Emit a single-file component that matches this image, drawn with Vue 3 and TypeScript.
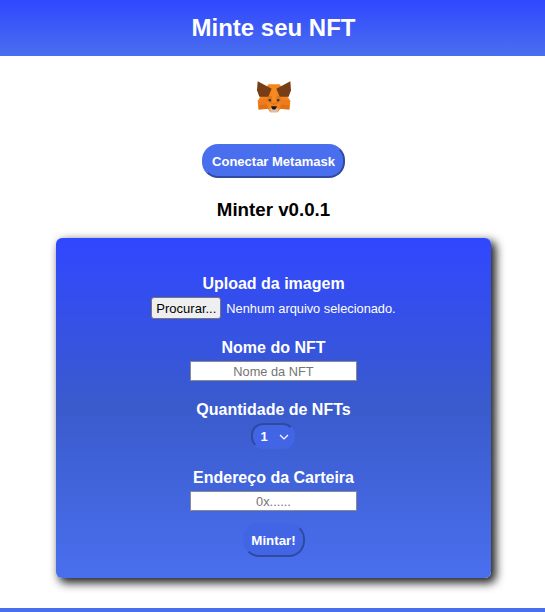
<script setup lang="ts">
const title: string = 'Minte seu NFT'
</script>

<template>
  <div class="page">
    <header class="top"><h1>{{ title }}</h1></header>
    <div class="content">
      <div class="logo">
        <svg width="34" height="33" viewBox="78 60 102 98">
          <polygon points="112,72 146,72 178,122 176,148 148,146 140,156 118,156 110,146 82,148 80,122" fill="#f6851b" />
          <polygon points="112,108 146,108 152,122 129,136 106,122" fill="#e2761b" />
          <polygon points="120,84 138,84 134,128 124,128" fill="#f58a22" />
          <polygon points="80,63 122,86 112,110 85,110 78,90" fill="#763d16" />
          <polygon points="178,63 136,86 146,110 173,110 180,90" fill="#763d16" />
          <polygon points="82,122 106,114 110,130 98,136 84,142" fill="#ee7c1c" />
          <polygon points="176,122 152,114 148,130 160,136 174,142" fill="#ee7c1c" />
          <polygon points="112,117 120,117 120,123 114,123" fill="#233447" />
          <polygon points="146,117 138,117 138,123 144,123" fill="#233447" />
          <polygon points="114,146 144,146 138,156 120,156" fill="#d7c1b3" />
          <polygon points="120,138 138,138 133,148 125,148" fill="#161616" />
          <polygon points="84,136 108,132 112,146 84,148" fill="#e06f17" />
          <polygon points="174,136 150,132 146,146 174,148" fill="#e06f17" />
        </svg>
      </div>
      <button class="btn connect" type="button">Conectar Metamask</button>
      <h2 class="version">Minter v0.0.1</h2>
      <main class="card">
        <section class="field upload">
          <label>Upload da imagem</label>
          <div class="file">
            <button class="browse" type="button">Procurar...</button>
            <span>Nenhum arquivo selecionado.</span>
          </div>
        </section>
        <section class="field">
          <label>Nome do NFT</label>
          <input type="text" placeholder="Nome da NFT" />
        </section>
        <section class="field">
          <label>Quantidade de NFTs</label>
          <div class="select-wrap">
            <select><option>1</option><option>2</option></select>
            <svg class="chevron" width="10" height="6" viewBox="0 0 10 6">
              <path d="M1 1 L5 5 L9 1" fill="none" stroke="#fff" stroke-width="1.2" />
            </svg>
          </div>
        </section>
        <section class="field">
          <label>Endereço da Carteira</label>
          <input type="text" placeholder="0x......" />
        </section>
        <button class="btn mint" type="button">Mintar!</button>
      </main>
    </div>
    <footer class="bottom"></footer>
  </div>
</template>

<style>
html, body { margin: 0; background: #fff; }
</style>

<style scoped>
.page {
  height: 612px;
  display: flex;
  flex-direction: column;
  font-family: "Liberation Sans", Arial, sans-serif;
  overflow: hidden;
}
.top {
  height: 56px;
  display: flex;
  align-items: center;
  justify-content: center;
  padding-left: 2px;
  background: linear-gradient(#3047ff, #4a6fee);
}
.top h1 { margin: 0; color: #fff; font-size: 24px; font-weight: 700; }
.content {
  display: flex;
  flex-direction: column;
  align-items: center;
  padding-left: 2px;
}
.logo { height: 34px; margin-top: 24px; display: flex; }
.btn {
  font-family: inherit;
  font-weight: 700;
  color: #fff;
  background: #4a6fee;
  border-style: solid;
  border-width: 2px;
  border-color: #4a6fee #2f4a9f #2f4a9f #4a6fee;
  border-radius: 16px;
  padding: 0;
}
.connect { width: 143px; height: 34px; margin-top: 30px; font-size: 13px; }
.version { margin: 22px 0 0; height: 26px; line-height: 20px; font-size: 18.72px; font-weight: 700; color: #000; }
.card {
  width: 435px;
  height: 340px;
  margin-top: 12px;
  box-sizing: border-box;
  padding-top: 36px;
  display: flex;
  flex-direction: column;
  align-items: center;
  border-radius: 6px;
  background: linear-gradient(#3047ff, #3a5bcc 50%, #4a6fee);
  box-shadow: 4px 4px 10px 1px #222;
}
.field { display: flex; flex-direction: column; align-items: center; }
.field label { color: #fff; font-size: 16px; font-weight: 700; line-height: 20px; margin-bottom: 3px; }
.field + .field { margin-top: 19px; }
.file { display: flex; align-items: center; gap: 5px; color: #fff; font-size: 12.8px; height: 22px; }
.browse {
  font-family: inherit;
  font-size: 13px;
  color: #000;
  background: #efefef;
  border: 1px solid #767676;
  border-radius: 3px;
  height: 22px;
  width: 70px;
  padding: 0;
}
input {
  box-sizing: border-box;
  width: 167px;
  height: 20px;
  padding: 0 2px;
  border: 1px solid #8a8a8a;
  background: #fff;
  text-align: center;
  font-family: inherit;
  font-size: 12.8px;
}
input::placeholder { color: #757575; }
.select-wrap { position: relative; display: flex; }
select {
  appearance: none;
  width: 44px;
  height: 26px;
  box-sizing: border-box;
  color: #fff;
  background: #4265e6;
  border-style: solid;
  border-width: 2px;
  border-color: #2f4a9f #4265e6 #4265e6 #2f4a9f;
  border-radius: 12px;
  font-family: inherit;
  font-size: 13px;
  font-weight: 700;
  padding-left: 7px;
}
.chevron { position: absolute; right: 6px; top: 11px; pointer-events: none; }
.mint { width: 62px; height: 34px; margin-top: 12px; font-size: 13.33px; background: #4265e6; border-color: #4265e6 #2f4a9f #2f4a9f #4265e6; }
.bottom { height: 4px; margin-top: 30px; background: #4a6fee; }
</style>
